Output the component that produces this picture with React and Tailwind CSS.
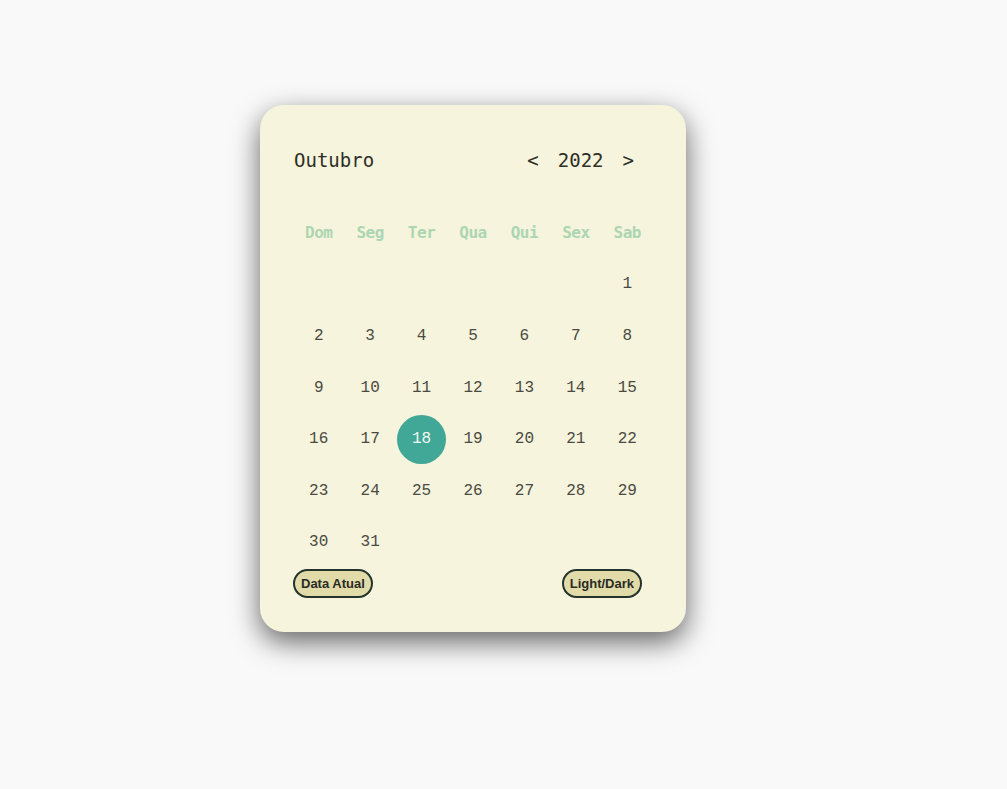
import React from "react";

const weekDays = ["Dom", "Seg", "Ter", "Qua", "Qui", "Sex", "Sab"];

// Outubro 2022 starts on a Saturday
const cells = [...Array(6).fill(null), ...Array.from({ length: 31 }, (_, i) => i + 1)];
const today = 18;

function PillButton({ children }) {
  return (
    <button className="h-[29px] rounded-full border-2 border-[#24332b] bg-[#e0dba8] px-[6px] text-[13px] font-semibold text-[#2a2a26] [font-family:'Liberation_Sans',Arial,sans-serif]">
      {children}
    </button>
  );
}

export default function App() {
  return (
    <div className="min-h-[789px] w-full bg-[#f9f9f9] pt-[105px] pl-[260px]">
      <div className="w-[426px] rounded-[24px] bg-[#f6f4dc] px-[33px] pt-[43px] pb-[34px] shadow-[0_10px_28px_rgba(0,0,0,0.6)]">
        {/* header */}
        <div className="flex h-[24px] items-center justify-between pl-[1px] pr-[19px] text-[19px] font-medium text-[#2e2e28] [font-family:'DejaVu_Sans_Mono',monospace]">
          <span>Outubro</span>
          <div className="flex items-center gap-[19px]">
            <span>&lt;</span>
            <span>2022</span>
            <span>&gt;</span>
          </div>
        </div>

        {/* calendar grid */}
        <div className="mt-[35px] grid w-[360px] grid-cols-7 auto-rows-[51.6px]">
          {weekDays.map((d) => (
            <div
              key={d}
              className="flex items-center justify-center text-[16px] font-bold text-[#acd6b2] [font-family:'DejaVu_Sans_Mono',monospace] tracking-[-0.5px]"
            >
              {d}
            </div>
          ))}
          {cells.map((n, i) => (
            <div key={i} className="flex items-center justify-center">
              {n === today ? (
                <div className="flex h-[49px] w-[49px] items-center justify-center rounded-full bg-[#41a796] text-[16px] text-[#f4f8f0] [font-family:'Liberation_Mono',monospace]">
                  {n}
                </div>
              ) : n ? (
                <span className="text-[16px] text-[#4a4a42] [font-family:'Liberation_Mono',monospace]">{n}</span>
              ) : null}
            </div>
          ))}
        </div>

        {/* footer buttons */}
        <div className="mt-[1px] flex items-center justify-between pr-[11px]">
          <PillButton>Data Atual</PillButton>
          <PillButton>Light/Dark</PillButton>
        </div>
      </div>
    </div>
  );
}
